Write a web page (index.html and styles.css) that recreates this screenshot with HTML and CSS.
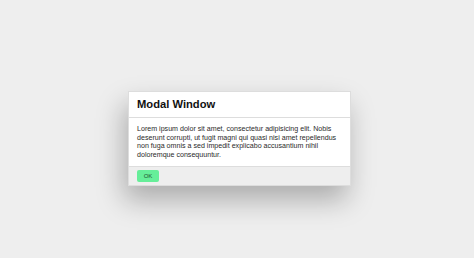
FILE: index.html
```html
<!DOCTYPE html>
<html lang="en">
<head>
  <meta charset="UTF-8" />
  <title>Modal Window</title>
  <link rel="stylesheet" href="styles.css">
</head>
<body>
  <div class="modal" role="dialog" aria-label="Modal Window">
    <div class="modal-header">
      <h2>Modal Window</h2>
    </div>
    <div class="modal-body">
      <p>Lorem ipsum dolor sit amet, consectetur adipisicing elit. Nobis deserunt corrupti, ut fugit magni qui quasi nisi amet repellendus non fuga omnis a sed impedit explicabo accusantium nihil doloremque consequuntur.</p>
    </div>
    <div class="modal-footer">
      <button type="button" class="btn">OK</button>
    </div>
  </div>
</body>
</html>
```
FILE: styles.css
```css
* { box-sizing: border-box; }
body {
  margin: 0;
  font-family: 'Liberation Sans', Arial, sans-serif;
  background: #eeeeee;
  min-height: 100vh;
  padding: 91px 0 0 128px;
}
.modal {
  width: 223px;
  background: #ffffff;
  border: 1px solid #dddddd;
  box-shadow: -4px 14px 26px rgba(0, 0, 0, 0.28);
}
.modal-header {
  padding: 6px 8px;
  border-bottom: 1px solid #dddddd;
}
.modal-header h2 {
  margin: 0;
  font-size: 11.2px;
  line-height: 13px;
  color: #111111;
}
.modal-body {
  padding: 7px 8px;
}
.modal-body p {
  margin: 0;
  font-size: 7.1px;
  line-height: 8.6px;
  color: #2a2a2a;
}
.modal-footer {
  background: #eeeeee;
  border-top: 1px solid #dddddd;
  padding: 3px 8px 3px;
}
.btn {
  display: block;
  background: #66ee99;
  color: #225533;
  border: none;
  border-radius: 2px;
  font-family: inherit;
  font-size: 6px;
  height: 12px;
  width: 22px;
  padding: 0;
}
```
